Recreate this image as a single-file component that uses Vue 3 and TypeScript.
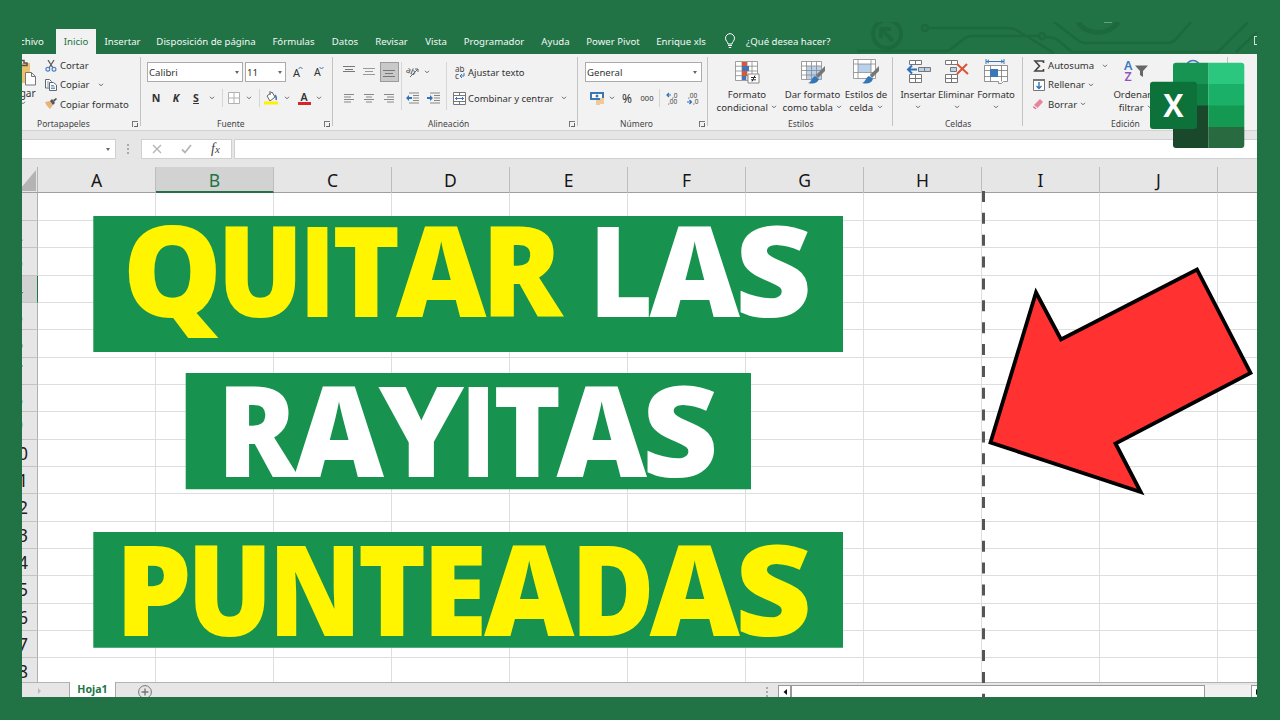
<script setup lang="ts">
interface Tab { label: string; left: number; width: number; active?: boolean }
interface Letter { ch: string; transform: string }
interface Word { letters: Letter[]; tone: string }

const tabs: Tab[] = [
  { label: 'Archivo', left: -12, width: 34 },
  { label: 'Inicio', left: 12, width: 40, active: true },
  { label: 'Insertar', left: 0, width: 53 },
  { label: 'Disposición de página', left: 0, width: 114 },
  { label: 'Fórmulas', left: 0, width: 61 },
  { label: 'Datos', left: 0, width: 42 },
  { label: 'Revisar', left: 0, width: 51 },
  { label: 'Vista', left: 0, width: 38 },
  { label: 'Programador', left: 0, width: 78 },
  { label: 'Ayuda', left: 0, width: 45 },
  { label: 'Power Pivot', left: 0, width: 70 },
  { label: 'Enrique xls', left: 0, width: 66 },
]

const columns: string[] = ['A', 'B', 'C', 'D', 'E', 'F', 'G', 'H', 'I', 'J', '']
const rows: number[] = Array.from({ length: 18 }, (_, i) => i + 1)

const pen = document.createElement('canvas').getContext('2d')!
pen.font = '800 126px "Open Sans", sans-serif'

// Stretches each letter so that its ink spans the given edges.
function place(text: string, baseline: number, edges: [number, number][]): Letter[] {
  return [...text].map((ch, i) => {
    const m = pen.measureText(ch)
    const ink = m.actualBoundingBoxLeft + m.actualBoundingBoxRight
    const [from, to] = edges[i]
    const scale = (to - from) / ink
    const x = from + m.actualBoundingBoxLeft * scale
    return { ch, transform: `translate(${x.toFixed(2)} ${baseline}) scale(${scale.toFixed(4)} 1)` }
  })
}

const words: Word[] = [
  { tone: 'yellow', letters: place('QUITAR', 317, [[128.5, 219], [225.5, 296], [307, 328], [335, 398], [396, 487], [490, 564]]) },
  { tone: 'white', letters: place('LAS', 317, [[597, 649], [649.5, 740.5], [740, 808]]) },
  { tone: 'white', letters: place('RAYITAS', 476.5, [[225.5, 299], [294, 384.5], [378.5, 464.5], [468, 488.5], [496, 559], [556.5, 647.5], [647, 714.5]]) },
  { tone: 'yellow', letters: place('PUNTEADAS', 636, [[124, 187.5], [195, 265], [276.5, 353.5], [360.5, 424], [431, 482.5], [484, 575], [579, 650], [649.5, 740.5], [740, 808]]) },
]
</script>

<template>
  <div class="frame">
    <div class="excel">
      <header class="tabbar">
        <nav class="tabs">
          <span
            v-for="t in tabs"
            :key="t.label"
            class="tab"
            :class="{ active: t.active }"
            :style="{ marginLeft: t.left + 'px', width: t.width + 'px' }"
          >{{ t.label }}</span>
        </nav>
        <svg class="bulb" width="12" height="16" viewBox="0 0 12 16" fill="none" stroke="#fff">
          <path d="M4 11C4 9 1.500 8 1.500 5.200a4.500 4.500 0 0 1 9 0C10.500 8 8 9 8 11zM4 12.500h4M4.800 14.500h2.400" />
        </svg>
        <span class="ask">¿Qué desea hacer?</span>
        <svg class="circuit" width="400" height="32" viewBox="857 22 400 32" fill="none" stroke="#1b6038" stroke-width="2.600">
          <circle cx="887" cy="34" r="14" stroke-width="4" />
          <path d="M893 41l-10-10M881 38v-9h10" stroke-width="4" />
          <circle cx="925" cy="28" r="3" />
          <path d="M928 28h80q6 0 10 3l36 22M857 51h88q4 0 6-2l14-11q3-2 7-2h66M1045 37q10 0 14 4l13 11h146l30-30M1054 22l25 19q3 2 7 2h82q4 0 7-3l16-18M1236 52l21-20" />
          <path d="M1078 22a22 18 0 0 0 40 0" stroke-width="5" />
          <circle cx="1042" cy="36" r="3" />
          <path d="M1104 22.500h8" stroke="#a9cbb7" stroke-width="1" />
        </svg>
        <span class="share"></span>
      </header>

      <section class="ribbon">
        <div class="group clipboard">
          <div class="body clip-body">
            <div class="paste">
              <svg width="16" height="27" viewBox="22 59 16 27">
                <path d="M22 63h10v20H22z" fill="#eebf6f" /><path d="M22 60.500h4v2.500h3v2.500h-7" fill="none" stroke="#555" stroke-width="1.500" />
                <path d="M27.500 72.500h6l4 4v8.500h-10zM33.500 72.500v4h4" fill="#fff" stroke="#777" />
              </svg>
              <span class="paste-text">Pegar</span>
              <svg class="chev" viewBox="0 0 6 4"><path d="M1 .8l2 2 2-2" /></svg>
            </div>
            <div class="clip-list">
              <div class="cmd">
                <svg width="12" height="12" viewBox="0 0 12 12" fill="none" stroke="#555" stroke-width="1.200"><path d="M3 0l5 8M9 0L4 8" /><circle cx="2.800" cy="9.200" r="1.900" stroke="#4f83c4" /><circle cx="9" cy="9.200" r="1.900" stroke="#4f83c4" /></svg>
                <span>Cortar</span>
              </div>
              <div class="cmd">
                <svg width="12" height="12" viewBox="0 0 12 12" fill="#fff" stroke="#666"><path d="M.5.5h4l2 2V9h-6z" /><path d="M4.500 3.500h4l3 2.500v5.500h-7z" /><path d="M6 6.500h3M6 8h4M6 9.500h4M2 3h2M2 5h2M2 7h2" stroke="#6997cc" /></svg>
                <span class="copy">Copiar</span>
                <svg class="chev" viewBox="0 0 6 4"><path d="M1 .8l2 2 2-2" /></svg>
              </div>
              <div class="cmd">
                <svg width="12" height="12" viewBox="0 0 12 12"><path d="M0 4l5-1 3 4-3 4C3 9 1 7 0 4z" fill="#e6b477" /><path d="M5 3l2-2 3 4-2 2z" fill="#555" /><path d="M8 2l3-2 1 1-3 3z" fill="#555" /></svg>
                <span>Copiar formato</span>
              </div>
            </div>
          </div>
          <footer class="label l-clip">Portapapeles<i class="launch"></i></footer>
        </div>

        <div class="group font">
          <div class="body">
            <div class="row first">
              <div class="combo name"><span>Calibri</span><i class="tri"></i></div>
              <div class="combo size"><span>11</span><i class="tri"></i></div>
              <span class="grow">A<svg width="5" height="4" viewBox="0 0 5 4"><path d="M.5 3l2-2 2 2" /></svg></span>
              <span class="grow small">A<svg width="5" height="4" viewBox="0 0 5 4"><path d="M.5 1l2 2 2-2" /></svg></span>
            </div>
            <div class="row font-tools">
              <b>N</b><b class="it">K</b><b class="un">S</b>
              <svg class="chev" viewBox="0 0 6 4"><path d="M1 .8l2 2 2-2" /></svg>
              <i class="sep"></i>
              <svg width="12" height="12" viewBox="0 0 12 12" fill="#fff" stroke="#b0b0b0"><path d="M.5.5h11v11H.5zM6 0v12M0 6h12" /></svg>
              <svg class="chev" viewBox="0 0 6 4"><path d="M1 .8l2 2 2-2" /></svg>
              <i class="sep"></i>
              <svg width="14" height="14" viewBox="0 0 14 14" fill="none" stroke="#666"><path d="M3 5l5-4 3 5-5 4z" fill="#fff" /><path d="M6 0v4" /><path d="M11 4q2 3 1 5" stroke="#3b76b8" stroke-width="1.500" /><path d="M0 10.500h14v3H0z" fill="#fff200" stroke="none" /></svg>
              <svg class="chev" viewBox="0 0 6 4"><path d="M1 .8l2 2 2-2" /></svg>
              <span class="font-color">A</span>
              <svg class="chev" viewBox="0 0 6 4"><path d="M1 .8l2 2 2-2" /></svg>
            </div>
          </div>
          <footer class="label l-font">Fuente<i class="launch"></i></footer>
        </div>

        <div class="group align">
          <div class="body align-body">
            <div class="align-grid">
              <svg width="12" height="12" viewBox="0 0 12 12" stroke="#777"><path d="M0 .5h12M2 3.500h8M0 5.500h12" /></svg>
              <svg width="12" height="12" viewBox="0 0 12 12" stroke="#999"><path d="M0 2.500h12M2 5.500h8M0 8.500h12" /></svg>
              <span class="pressed"><svg width="12" height="12" viewBox="0 0 12 12" stroke="#777"><path d="M0 4.500h12M2 7.500h8M0 10.500h12" /></svg></span>
              <svg width="12" height="12" viewBox="0 0 12 12" stroke="#888"><path d="M1 2.500h10M1 5h7M1 7.500h10M1 10h7" /></svg>
              <svg width="12" height="12" viewBox="0 0 12 12" stroke="#888"><path d="M1 2.500h10M3 5h6M1 7.500h10M3 10h6" /></svg>
              <svg width="12" height="12" viewBox="0 0 12 12" stroke="#888"><path d="M1 2.500h10M4 5h7M1 7.500h10M4 10h7" /></svg>
            </div>
            <div class="indent">
              <div class="indent-line">
                <svg width="14" height="12" viewBox="0 0 14 12"><text x="0" y="8" font-size="8" transform="rotate(25 5 6)" fill="#444">ab</text><path d="M4 11l8-8M12 6V3H9" fill="none" stroke="#666" /></svg>
                <svg class="chev" viewBox="0 0 6 4"><path d="M1 .8l2 2 2-2" /></svg>
              </div>
              <div class="indent-line">
                <svg width="13" height="12" viewBox="0 0 13 12"><path d="M3 1h10M7 3.500h6M7 6h6M7 8.500h6M3 11h10" stroke="#888" /><path d="M0 6l3-3v2h3v2H3v2z" fill="#2f72b8" /></svg>
                <svg width="13" height="12" viewBox="0 0 13 12"><path d="M3 1h10M7 3.500h6M7 6h6M7 8.500h6M3 11h10" stroke="#888" /><path d="M6 6L3 3v2H0v2h3v2z" fill="#2f72b8" /></svg>
              </div>
            </div>
            <div class="wrap">
              <div class="cmd">
                <svg width="13" height="13" viewBox="0 0 13 13"><text x="2" y="6" font-size="8" fill="#444">ab</text><text x="2" y="12.500" font-size="8" fill="#444">c</text><path d="M11 7v3H7M9 8l-2 2 2 2" fill="none" stroke="#3b76b8" /></svg>
                <span>Ajustar texto</span>
              </div>
              <div class="cmd">
                <svg width="13" height="13" viewBox="0 0 13 13" fill="#fff" stroke="#777"><path d="M.5.5h12v12H.5zM.5 3.500h12M.5 9.500h12M6.500.5v3M6.500 9.500v3" /><path d="M2 6.500h9M4 5L2.500 6.500 4 8M9 5l1.500 1.500L9 8" fill="none" stroke="#3b76b8" /></svg>
                <span class="merge">Combinar y centrar</span>
                <svg class="chev" viewBox="0 0 6 4"><path d="M1 .8l2 2 2-2" /></svg>
              </div>
            </div>
          </div>
          <footer class="label l-align">Alineación<i class="launch"></i></footer>
        </div>

        <div class="group number">
          <div class="body">
            <div class="row first"><div class="combo general"><span>General</span><i class="tri"></i></div></div>
            <div class="row number-tools">
              <svg width="14" height="13" viewBox="0 0 14 13"><path d="M1 1h12v6H1z" fill="#fff" stroke="#3b76b8" stroke-width="2" /><circle cx="7" cy="4" r="1.500" fill="#3b76b8" /><path d="M6 8h4v5H6zM10 6h4v6h-4z" fill="#efc99b" /></svg>
              <svg class="chev" viewBox="0 0 6 4"><path d="M1 .8l2 2 2-2" /></svg>
              <span class="pct">%</span><span class="thousand">000</span>
              <i class="sep"></i>
              <svg width="12" height="13" viewBox="0 0 12 13"><path d="M5 3H1M3 1L1 3l2 2" fill="none" stroke="#2f72b8" stroke-width="1.200" /><text x="6" y="6" class="dec">,0</text><text x="2" y="12" class="dec">,00</text></svg>
              <svg width="12" height="13" viewBox="0 0 12 13"><text x="1" y="6" class="dec">,00</text><path d="M0 10h4M2.500 8l2 2-2 2" fill="none" stroke="#2f72b8" stroke-width="1.200" /><text x="6" y="12" class="dec">,0</text></svg>
            </div>
          </div>
          <footer class="label l-number">Número<i class="launch"></i></footer>
        </div>

        <div class="group styles">
          <div class="body big-row">
            <div class="big b1">
              <svg width="26" height="26" viewBox="0 0 26 26"><path d="M1.500 2.500h22v19h-22zM1.500 7.200h22M1.500 12h22M1.500 16.700h22M8 2.500v19M13 2.500v19M18 2.500v19" fill="#fff" stroke="#888" stroke-width=".8" /><path d="M8 3h5v4H8zM8 12h5v5H8z" fill="#d8573c" /><path d="M8 7h7v5H8zM8 17h4v4H8z" fill="#4175b5" /><path d="M14 15h11v9H14z" fill="#fff" stroke="#888" /><path d="M17 18.500h5M17 20.800h5M21 16.500l-3 6" stroke="#333" fill="none" /></svg>
              <span>Formato<br>condicional <svg class="chev" viewBox="0 0 6 4"><path d="M1 .8l2 2 2-2" /></svg></span>
            </div>
            <div class="big b2">
              <svg width="26" height="26" viewBox="0 0 26 26"><path d="M1.500 2.500h20v18h-20z" fill="#fff" /><path d="M7 7h14v13H7z" fill="#b9d1ea" /><path d="M1.500 2.500h20v18h-20zM1.500 7h20M1.500 11.500h20M1.500 16h20M6.500 2.500v18M11.500 2.500v18M16.500 2.500v18" fill="none" stroke="#888" stroke-width=".8" /><path d="M25 7v5l-7 7-2-3z" fill="#777" /><path d="M15 17l4 3c-2 5-6 5-11 4 4-1 3-5 7-7z" fill="#3477b9" /></svg>
              <span>Dar formato<br>como tabla <svg class="chev" viewBox="0 0 6 4"><path d="M1 .8l2 2 2-2" /></svg></span>
            </div>
            <div class="big b3">
              <svg width="26" height="26" viewBox="0 0 26 26"><path d="M.5.5h22v19H.5z" fill="#fff" /><path d="M5 5h13v8H5z" fill="#b9d1ea" /><path d="M.5.5h22v19H.5zM.5 5h22M.5 13.500h22M5 .5v19M18 .5v19" fill="none" stroke="#888" stroke-width=".8" /><path d="M26 7v5l-7 7-2-3z" fill="#777" /><path d="M16 17l4 3c-2 5-6 5-11 4 4-1 3-5 7-7z" fill="#3477b9" /></svg>
              <span>Estilos de<br>celda <svg class="chev" viewBox="0 0 6 4"><path d="M1 .8l2 2 2-2" /></svg></span>
            </div>
          </div>
          <footer class="label l-styles">Estilos</footer>
        </div>

        <div class="group cells">
          <div class="body big-row">
            <div class="big c1">
              <svg width="26" height="26" viewBox="0 0 26 26" fill="#fff" stroke="#777"><path d="M4.500 1.500h12v4h-12zM10.500 1.500v4M4.500 15.500h12v8h-12zM10.500 15.500v8M4.500 19.500h12" /><path d="M13.500 8.500h12v4h-12zM19.500 8.500v4" fill="#b9d1ea" /><path d="M12 10.500H3M7 6.500l-4 4 4 4" fill="none" stroke="#2f72b8" stroke-width="2" /></svg>
              <span>Insertar<br><svg class="chev" viewBox="0 0 6 4"><path d="M1 .8l2 2 2-2" /></svg></span>
            </div>
            <div class="big c2">
              <svg width="26" height="26" viewBox="0 0 26 26" fill="#fff" stroke="#777"><path d="M2.500 1.500h12v4h-12zM8.500 1.500v4M2.500 15.500h12v8h-12zM8.500 15.500v8M2.500 19.500h12" /><path d="M7.500 8.500h6v4h-6z" fill="#b9d1ea" /><path d="M14 5l11 10M24 5L14 15" fill="none" stroke="#d95436" stroke-width="2" /></svg>
              <span>Eliminar<br><svg class="chev" viewBox="0 0 6 4"><path d="M1 .8l2 2 2-2" /></svg></span>
            </div>
            <div class="big c3">
              <svg width="26" height="26" viewBox="0 0 26 26" fill="#fff" stroke="#777"><path d="M1.500 6.500h23v16h-4l-2 2h-3v-2h-14zM1.500 11.500h23M1.500 17.500h23M7.500 6.500v16M18.500 6.500v16" stroke-width=".8" /><path d="M7 10h8v8H7z" fill="#3b76b8" stroke="none" /><path d="M3 2.500h18M3 0v5M21 0v5M6 .8L4 2.500 6 4.200M18 .8l2 1.700-2 1.700" fill="none" stroke="#3b76b8" /></svg>
              <span>Formato<br><svg class="chev" viewBox="0 0 6 4"><path d="M1 .8l2 2 2-2" /></svg></span>
            </div>
          </div>
          <footer class="label l-cells">Celdas</footer>
        </div>

        <div class="group edit">
          <div class="body edit-body">
            <div class="edit-list">
              <div class="cmd">
                <svg width="12" height="12" viewBox="0 0 12 12" fill="none" stroke="#444" stroke-width="1.600"><path d="M10.500 3V1H2l4.500 5L2 11h8.500V9" /></svg>
                <span class="sum">Autosuma</span>
                <svg class="chev" viewBox="0 0 6 4"><path d="M1 .8l2 2 2-2" /></svg>
              </div>
              <div class="cmd">
                <svg width="12" height="12" viewBox="0 0 12 12" fill="#fff" stroke="#777"><path d="M.5.5h11v11H.5z" /><path d="M0 1h12" stroke-width="2" /><path d="M6 3v7M3.500 7L6 9.500 8.500 7" fill="none" stroke="#2f72b8" stroke-width="1.400" /></svg>
                <span>Rellenar</span>
                <svg class="chev" viewBox="0 0 6 4"><path d="M1 .8l2 2 2-2" /></svg>
              </div>
              <div class="cmd">
                <svg width="12" height="12" viewBox="0 0 12 12"><path d="M7 1l3 3-5.500 6-3.500-3z" fill="#e8849a" /><path d="M.5 8l3 2.500-1 .8L0 9.500z" fill="#d96b85" /></svg>
                <span>Borrar</span>
                <svg class="chev" viewBox="0 0 6 4"><path d="M1 .8l2 2 2-2" /></svg>
              </div>
            </div>
            <div class="big sort">
              <svg width="24" height="26" viewBox="0 0 24 26"><text x="0" y="11" font-size="12.500" font-weight="600" fill="#3b76c0">A</text><text x=".5" y="22" font-size="12.500" font-weight="600" fill="#9354c0">Z</text><path d="M11 6.500h13l-5 5.500v6l-3-2v-4z" fill="#666" /></svg>
              <span>Ordenar y<br>filtrar <svg class="chev" viewBox="0 0 6 4"><path d="M1 .8l2 2 2-2" /></svg></span>
            </div>
            <svg class="search" width="20" height="24" viewBox="0 0 20 24" fill="none" stroke="#3b76c0" stroke-width="1.600"><circle cx="10" cy="8.500" r="7" /></svg>
            <i class="edge"></i>
          </div>
          <footer class="label l-edit">Edición</footer>
        </div>
      </section>

      <section class="formula">
        <div class="namebox"><i class="tri"></i></div>
        <i class="dots"></i>
        <div class="fx">
          <svg width="10" height="10" viewBox="0 0 10 10" stroke="#b5b5b5" stroke-width="1.400"><path d="M1 1l8 8M9 1L1 9" /></svg>
          <svg width="11" height="10" viewBox="0 0 11 10" fill="none" stroke="#b5b5b5" stroke-width="1.800"><path d="M1 5.500L4 8.500 10 1" /></svg>
          <span class="fn">f<small>x</small></span>
        </div>
        <div class="input"></div>
      </section>

      <div class="colhead">
        <div class="corner"><i></i></div>
        <div v-for="(c, i) in columns" :key="i" class="col" :class="{ sel: c === 'B' }">{{ c }}</div>
      </div>

      <main class="sheet">
        <div v-for="r in rows" :key="r" class="line">
          <div class="num" :class="{ sel: r === 4 }"><span>{{ r }}</span></div>
          <div v-for="(c, i) in columns" :key="i" class="cell"></div>
        </div>
      </main>

      <footer class="bottom">
        <i class="nav-arrow"></i>
        <span class="sheet-tab">Hoja1</span>
        <svg class="plus" width="14" height="14" viewBox="0 0 14 14" fill="none" stroke="#777"><circle cx="7" cy="7" r="6.400" /><path d="M7 3.500v7M3.500 7h7" stroke-width="1.400" /></svg>
        <i class="dots low"></i>
        <div class="scroll">
          <span class="btn"><svg width="4" height="6" viewBox="0 0 4 6"><path d="M4 0v6L.5 3z" fill="#111" /></svg></span>
          <span class="thumb"></span>
          <span class="track"></span>
          <span class="btn end"><svg width="4" height="6" viewBox="0 0 4 6"><path d="M0 0v6l3.500-3z" fill="#111" /></svg></span>
        </div>
      </footer>
    </div>

    <svg class="overlay" width="1280" height="720" viewBox="0 0 1280 720">
      <path d="M983.500 191V699" stroke="#555" stroke-width="3" stroke-dasharray="11 10.860" />
      <path d="M990.500 442.500L1036 292.500L1061 339.500L1197 269.500L1250.500 373L1115.500 443.500L1140.700 492z" fill="#ff3131" stroke="#000" stroke-width="3.800" />
      <g fill="#17924f"><path d="M93.300 216h749.700v136H93.300zM185.700 373h565.300v116.300H185.700zM93.300 532h749.700v115.700H93.300z" /></g>
      <g class="headline">
        <g v-for="(w, i) in words" :key="i" :class="w.tone"><text v-for="(l, j) in w.letters" :key="j" :transform="l.transform">{{ l.ch }}</text></g>
      </g>
      <g>
        <path d="M1208.300 62.700h33a3 3 0 0 1 3 3V84h-36z" fill="#2bc77f" />
        <path d="M1176 62.700h32.300V84H1173V65.700a3 3 0 0 1 3-3z" fill="#189452" />
        <path d="M1173 84h35.300v22H1173z" fill="#0f8144" /><path d="M1208.300 84h36v22h-36z" fill="#1bb067" />
        <path d="M1173 105.500h35.300V148H1176a3 3 0 0 1-3-3z" fill="#19482b" />
        <path d="M1208.300 105.500h36v21.500h-36z" fill="#149953" />
        <path d="M1208.300 127h36v18a3 3 0 0 1-3 3h-33z" fill="#296a41" />
        <rect x="1150" y="81.700" width="47" height="47.300" rx="3" fill="#0d7239" />
        <text class="excel-x" transform="translate(1173.300 117) scale(.92 1)" text-anchor="middle">X</text>
      </g>
    </svg>
  </div>
</template>

<style>
html, body { margin: 0; overflow: hidden; }
</style>

<style scoped>
* { box-sizing: border-box; }
.frame { width: 1280px; height: 720px; padding: 22px 23px 23px 22px; background: #217346; position: relative; overflow: hidden; font-family: "Noto Sans", "Open Sans", sans-serif; font-size: 9.600px; color: #333; }
.excel { width: 1235px; height: 675px; display: flex; flex-direction: column; overflow: hidden; background: #fff; }
.excel svg { flex: none; }
.tabbar { height: 32px; flex: none; background: #217346; display: flex; align-items: flex-end; color: #f4f8f5; font-size: 9.650px; position: relative; }
.tabs { display: flex; }
.tab { height: 25px; line-height: 25px; text-align: center; white-space: nowrap; flex: none; }
.tab.active { background: #f2f2f2; color: #217346; }
.bulb { margin: 0 10px 5px 10px; }
.ask { line-height: 25px; height: 25px; white-space: nowrap; }
.circuit { position: absolute; right: 0; top: 0; opacity: .5; }
.share { position: absolute; right: 0; top: 14px; width: 3px; height: 9px; border: 1px solid #cfe0d6; border-right: 0; }
.ribbon { height: 77px; flex: none; display: grid; grid-template-columns: 119px 192px 245px 130px 185px 130px 234px; background: #f2f2f2; border-bottom: 1px solid #d2d2d2; }
.group { display: flex; flex-direction: column; position: relative; min-width: 0; }
.group:not(.edit)::after { content: ""; position: absolute; right: 0; top: 3px; width: 1px; height: 69px; background: #c3c3c3; }
.body { height: 62px; flex: none; }
.label { height: 14px; line-height: 15px; font-size: 8.500px; color: #444; white-space: nowrap; position: relative; }
.launch { position: absolute; right: 3px; top: 5px; width: 6px; height: 6px; border: solid #777; border-width: 1px 0 0 1px; }
.launch::after { content: ""; position: absolute; right: 0; bottom: 0; width: 3px; height: 3px; border: solid #666; border-width: 0 1px 1px 0; }
.l-clip { padding-left: 15px; } .l-font { padding-left: 76px; } .l-align { padding-left: 95px; } .l-number { padding-left: 42px; } .l-styles { padding-left: 80px; } .l-cells { padding-left: 52px; } .l-edit { padding-left: 88px; }
.chev { width: 6px; height: 4px; fill: none; stroke: #666; }
.cmd { display: flex; align-items: center; gap: 3px; height: 19.300px; white-space: nowrap; }
.clip-body { display: flex; }
.paste { width: 22px; padding-top: 5px; display: flex; flex-direction: column; align-items: flex-start; overflow: hidden; }
.paste-text { margin-left: -14px; line-height: 14px; font-size: 10px; }
.paste svg:first-child { margin-left: -2px; }
.paste .chev { margin: 1px 0 0 -2px; }
.clip-list { padding: 2px 0 0 1px; }
.copy { margin-right: 5px; }
.row { display: flex; align-items: center; }
.row.first { height: 36px; padding-left: 6px; gap: 2px; }
.combo { height: 20px; border: 1px solid #ababab; background: #fff; display: flex; align-items: center; justify-content: space-between; padding: 0 3px 0 1px; }
.name { width: 96px; } .size { width: 41px; }
.number .row.first { padding-left: 7px; } .general { width: 117px; padding-right: 4px; }
.tri { width: 0; height: 0; border: solid transparent; border-width: 3px 2.500px 0; border-top-color: #666; }
.grow { width: 18px; padding-left: 5px; font-size: 11px; display: flex; flex: none; }
.grow svg { fill: none; stroke: #3b76b8; margin: 1px 0 0 -2px; }
.grow.small { font-size: 10.500px; padding-left: 6px; }
.font-tools { display: grid; grid-template-columns: 20px 20px 20px 12px 8px 16px 14px 6px 18px 14px 20px 10px; justify-items: center; padding-left: 5px; height: 17px; font-size: 10.600px; margin-top: -1px; }
.it { font-style: italic; } .un { text-decoration: underline; }
.sep { width: 1px; height: 18px; background: #d6d6d6; }
.font-color { width: 13px; height: 14px; line-height: 12px; text-align: center; border-bottom: 3px solid #d8232a; font-weight: 600; }
.align-body { display: flex; padding-top: 8px; }
.align-grid { display: grid; grid-template-columns: repeat(3, 20px); grid-template-rows: 20px 31px; align-items: center; justify-items: center; padding-left: 6px; margin-right: 2px; }
.pressed { width: 19px; height: 20px; display: grid; place-items: center; background: #c9c9c9; border: 1px solid #9b9b9b; }
.indent { width: 46px; display: flex; flex-direction: column; border: solid #d6d6d6; border-width: 0 1px; height: 48px; padding: 0 4px; }
.indent-line { display: flex; align-items: center; gap: 8px; flex: none; }
.indent-line:first-child { height: 20px; gap: 4px; }
.indent-line:last-child { height: 31px; }
.wrap { padding-left: 6px; font-size: 9.450px; }
.wrap .cmd { height: 20px; gap: 2px; }
.wrap .cmd + .cmd { height: 32px; }
.merge { margin-right: 6px; }
.number-tools { display: grid; grid-template-columns: 20px 10px 20px 20px 4px 22px 20px; padding-left: 9px; justify-items: center; height: 17px; margin-top: -1px; }
.pct { font-size: 12px; } .thousand { font-size: 7.500px; }
.dec { font-size: 6.500px; fill: #444; }
.big-row { display: flex; }
.big { padding-top: 5px; display: flex; flex-direction: column; align-items: center; text-align: center; white-space: nowrap; line-height: 13.300px; }
.big > span { margin-top: 3px; }
.big .chev { vertical-align: 2px; margin-left: 1px; }
.b1 { width: 78px; } .b2 { width: 53px; } .b3 { width: 54px; }
.c1 { width: 50px; } .c2 { width: 26px; } .c3 { width: 54px; }
.cells .big > span { letter-spacing: -.1px; }
.edit-body { display: flex; }
.edit-list { padding: 2px 0 0 10px; width: 86px; flex: none; }
.sum { margin-right: 5px; }
.sort { width: 46px; margin-left: 4px; flex: none; }
.search { margin: 5px 0 0 24px; }
.edge { width: 1px; height: 69px; margin: 3px 0 0 24px; background: #c3c3c3; flex: none; }
.formula { height: 36px; flex: none; background: #e6e6e6; display: flex; padding-top: 8px; }
.namebox { width: 94px; height: 20px; background: #fff; border: 1px solid #d0d0d0; border-left: 0; display: flex; align-items: center; justify-content: flex-end; padding-right: 5px; }
.dots { width: 2px; height: 10px; margin: 5px 11px; background: repeating-linear-gradient(#aaa 0 2px, transparent 2px 4px); flex: none; }
.fx { width: 91px; height: 20px; margin-left: 1px; background: #fff; border: 1px solid #d0d0d0; display: grid; grid-template-columns: 29px 30px 29px; place-items: center; }
.fn { font: italic 14px/18px "Liberation Serif", serif; color: #444; } .fn small { font-size: 11px; }
.input { flex: 1; height: 20px; margin-left: 2px; border: 1px solid #d0d0d0; border-right: 0; background: #fff; }
.colhead { height: 26px; flex: none; display: flex; background: #e6e6e6; border-bottom: 1px solid #9f9f9f; }
.corner { width: 16px; flex: none; border-right: 1px solid #b5b5b5; overflow: hidden; }
.corner i { display: block; width: 14px; height: 21px; margin-top: 3px; background: #b4b4b4; clip-path: polygon(100% 0, 100% 100%, 0 100%, 0 80%); }
.col { width: 118px; flex: none; height: 26px; border-right: 1px solid #bdbdbd; text-align: center; font-size: 17.500px; line-height: 27px; color: #161616; }
.col.sel { background: #d2d2d2; color: #217346; border-bottom: 2px solid #217346; }
.sheet { flex: 1; overflow: hidden; display: flex; flex-direction: column; }
.line { height: 27.330px; flex: none; display: flex; }
.line:first-child { height: 28px; }
.num { width: 16px; flex: none; overflow: hidden; background: #e6e6e6; border-right: 1px solid #b0b0b0; border-bottom: 1px solid #c4c4c4; }
.num span { display: block; width: 40px; margin-left: -24px; text-align: center; font-size: 17.500px; line-height: 27px; color: #222; }
.num.sel { background: #d2d2d2; border-right: 1px solid #217346; }
.num.sel span { color: #217346; }
.cell { width: 118px; flex: none; border: solid #dedede; border-width: 0 1px 1px 0; }
.bottom { height: 15px; flex: none; background: #e6e6e6; border-top: 1px solid #b3b3b3; display: flex; }
.nav-arrow { margin: 5px 29px 0 16px; border: solid transparent; border-width: 3px 0 3px 3px; border-left-color: #bbb; height: 0; flex: none; }
.sheet-tab { width: 47px; flex: none; height: 16px; margin-top: -1px; background: #fff; border: solid #aaa; border-width: 0 1px; color: #217346; font-size: 10.600px; font-weight: 700; text-align: center; line-height: 15px; margin-left: -1px; }
.plus { margin: 2px 0 0 22px; }
.low { margin: 4px 10px 0 614px; }
.scroll { flex: 1; min-width: 0; overflow: hidden; display: flex; margin-top: 2px; background: #f0f0f0; }
.btn { width: 13px; flex: none; border: 1px solid #999; border-bottom: 0; background: #fff; display: grid; place-items: center; }
.thumb { width: 414px; flex: none; background: #fff; border: 1px solid #999; border-bottom: 0; }
.track { width: 46px; flex: none; }
.overlay { position: absolute; left: 0; top: 0; }
.headline { font-family: "Open Sans", sans-serif; font-weight: 800; font-size: 126px; font-kerning: none; }
.yellow { fill: #fff500; } .white { fill: #fff; }
.excel-x { font: 700 33px "Open Sans", sans-serif; fill: #fff; }
</style>
